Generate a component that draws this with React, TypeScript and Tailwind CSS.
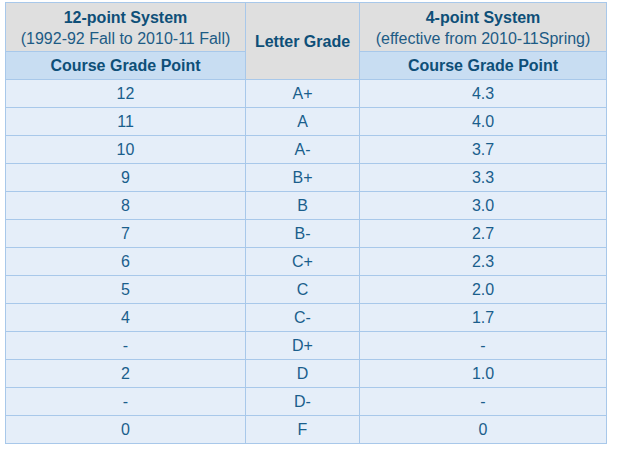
const rows: [string, string, string][] = [
  ["12", "A+", "4.3"],
  ["11", "A", "4.0"],
  ["10", "A-", "3.7"],
  ["9", "B+", "3.3"],
  ["8", "B", "3.0"],
  ["7", "B-", "2.7"],
  ["6", "C+", "2.3"],
  ["5", "C", "2.0"],
  ["4", "C-", "1.7"],
  ["-", "D+", "-"],
  ["2", "D", "1.0"],
  ["-", "D-", "-"],
  ["0", "F", "0"],
];

const App = () => {
  return (
    <div className="w-[632px] h-[453px] bg-white pt-[2px] pl-[5px] font-['Liberation_Sans',Arial,sans-serif] text-[#0e4f78]">
      <table className="border-collapse w-[601px] table-fixed text-center text-[16px]">
        <colgroup>
          <col className="w-[240px]" />
          <col className="w-[114px]" />
          <col className="w-[247px]" />
        </colgroup>
        <thead>
          <tr className="h-[49px] bg-[#dfdfdf]">
            <th className="border border-[#a8c8ea] font-normal leading-[21px] pt-[2px]">
              <div className="font-bold">12-point System</div>
              <div className="text-[#1d5b85]">(1992-92 Fall to 2010-11 Fall)</div>
            </th>
            <th rowSpan={2} className="border border-[#a8c8ea] font-bold pt-[2px]">
              Letter Grade
            </th>
            <th className="border border-[#a8c8ea] font-normal leading-[21px] pt-[2px]">
              <div className="font-bold">4-point System</div>
              <div className="text-[#1d5b85]">(effective from 2010-11Spring)</div>
            </th>
          </tr>
          <tr className="h-[28px] bg-[#c8ddf2]">
            <th className="border border-[#a8c8ea] font-bold">Course Grade Point</th>
            <th className="border border-[#a8c8ea] font-bold">Course Grade Point</th>
          </tr>
        </thead>
        <tbody>
          {rows.map((r, i) => (
            <tr key={i} className="h-[28px] bg-[#e5eef9]">
              {r.map((c, j) => (
                <td key={j} className="border border-[#a8c8ea] text-[#1a5e8c] p-0">
                  {c}
                </td>
              ))}
            </tr>
          ))}
        </tbody>
      </table>
    </div>
  );
};

export default App;
